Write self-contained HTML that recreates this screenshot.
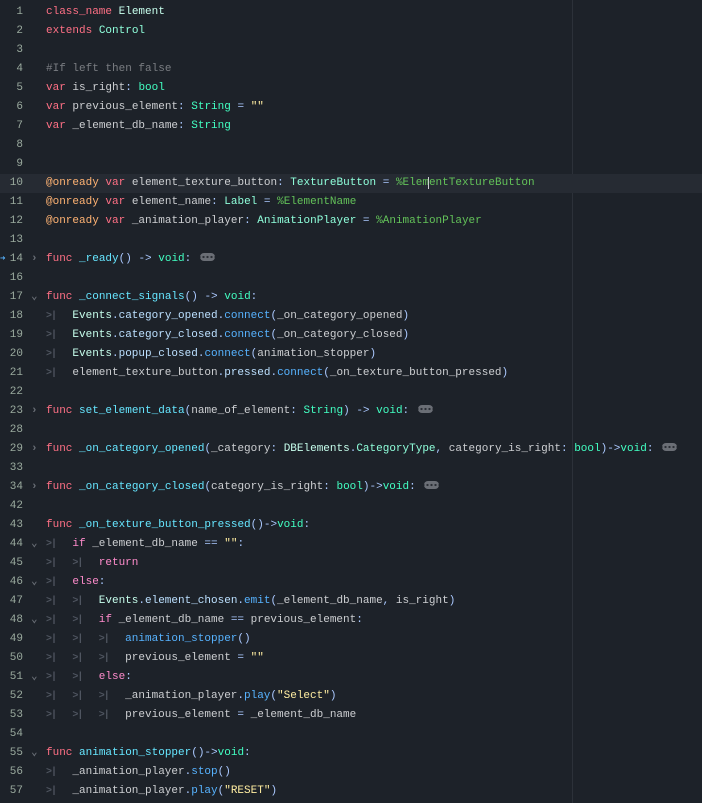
<!DOCTYPE html>
<html><head><meta charset="utf-8"><style>
html,body{margin:0;padding:0;background:#1d2229;width:702px;height:803px;overflow:hidden}
#ed{position:absolute;left:0;top:3px;width:702px;font-family:"Liberation Mono",monospace;font-size:11px;color:#cdcfd2}
.l{position:relative;height:19px;line-height:19px;white-space:pre}
.hl{background:#262b33}
.n{position:absolute;left:0;width:23px;text-align:right;color:#9aaa9e}
.fd{position:absolute;left:31px;top:0;color:#6a6f77;font-size:11px;font-weight:bold}
.c{position:absolute;left:46px}
.tb{display:inline-block;width:26.4px;color:#4f5560;font-size:10px;font-weight:bold;vertical-align:top;letter-spacing:-1px}
.k{color:#ff7085}.cf{color:#ff8ccc}.t{color:#42ffc2}.e{color:#8fffdb}.u{color:#c7ffed}
.s{color:#ffeda1}.y{color:#abc9ff}.f{color:#57b3ff}.fn{color:#66e6ff}.m{color:#bce0ff}
.a{color:#ffb373}.np{color:#63c259}.cm{color:#7a7d82}
.pill{display:inline-block;width:15px;height:8px;border-radius:4px;background:#6a6e75;vertical-align:middle;margin-left:2px;position:relative;top:-1px;
background-image:radial-gradient(circle,#2a2e35 1px,transparent 1.3px);background-size:4px 8px;background-position:1.5px 0;background-repeat:repeat-x}
.guide{position:absolute;left:572px;top:0;width:1px;height:803px;background:#2c3139}
</style></head><body>
<div class="guide"></div>
<div id="ed">
<div class="l"><span class="n">1</span><span class="c"><span class="k">class_name</span> <span class="u">Element</span></span></div>
<div class="l"><span class="n">2</span><span class="c"><span class="k">extends</span> <span class="e">Control</span></span></div>
<div class="l"><span class="n">3</span></div>
<div class="l"><span class="n">4</span><span class="c"><span class="cm">#If left then false</span></span></div>
<div class="l"><span class="n">5</span><span class="c"><span class="k">var</span> is_right<span class="y">:</span> <span class="t">bool</span></span></div>
<div class="l"><span class="n">6</span><span class="c"><span class="k">var</span> previous_element<span class="y">:</span> <span class="t">String</span> <span class="y">=</span> <span class="s">""</span></span></div>
<div class="l"><span class="n">7</span><span class="c"><span class="k">var</span> _element_db_name<span class="y">:</span> <span class="t">String</span></span></div>
<div class="l"><span class="n">8</span></div>
<div class="l"><span class="n">9</span></div>
<div class="l hl"><span class="n">10</span><span class="c"><span class="a">@onready</span> <span class="k">var</span> element_texture_button<span class="y">:</span> <span class="e">TextureButton</span> <span class="y">=</span> <span class="np">%Elem<span style="border-left:1px solid #cdcfd2;margin-left:-1px"></span>entTextureButton</span></span></div>
<div class="l"><span class="n">11</span><span class="c"><span class="a">@onready</span> <span class="k">var</span> element_name<span class="y">:</span> <span class="e">Label</span> <span class="y">=</span> <span class="np">%ElementName</span></span></div>
<div class="l"><span class="n">12</span><span class="c"><span class="a">@onready</span> <span class="k">var</span> _animation_player<span class="y">:</span> <span class="e">AnimationPlayer</span> <span class="y">=</span> <span class="np">%AnimationPlayer</span></span></div>
<div class="l"><span class="n">13</span></div>
<div class="l"><span style="position:absolute;left:0;color:#57b3ff;font-size:9px">➜</span><span class="n">14</span><span class="fd">›</span><span class="c"><span class="k">func</span> <span class="fn">_ready</span><span class="y">()</span> <span class="y">-&gt;</span> <span class="t">void</span><span class="y">:</span> <span class="pill"></span></span></div>
<div class="l"><span class="n">16</span></div>
<div class="l"><span class="n">17</span><span class="fd">⌄</span><span class="c"><span class="k">func</span> <span class="fn">_connect_signals</span><span class="y">()</span> <span class="y">-&gt;</span> <span class="t">void</span><span class="y">:</span></span></div>
<div class="l"><span class="n">18</span><span class="c"><span class="tb">&gt;|</span><span class="u">Events</span><span class="y">.</span><span class="m">category_opened</span><span class="y">.</span><span class="f">connect</span><span class="y">(</span>_on_category_opened<span class="y">)</span></span></div>
<div class="l"><span class="n">19</span><span class="c"><span class="tb">&gt;|</span><span class="u">Events</span><span class="y">.</span><span class="m">category_closed</span><span class="y">.</span><span class="f">connect</span><span class="y">(</span>_on_category_closed<span class="y">)</span></span></div>
<div class="l"><span class="n">20</span><span class="c"><span class="tb">&gt;|</span><span class="u">Events</span><span class="y">.</span><span class="m">popup_closed</span><span class="y">.</span><span class="f">connect</span><span class="y">(</span>animation_stopper<span class="y">)</span></span></div>
<div class="l"><span class="n">21</span><span class="c"><span class="tb">&gt;|</span>element_texture_button<span class="y">.</span><span class="m">pressed</span><span class="y">.</span><span class="f">connect</span><span class="y">(</span>_on_texture_button_pressed<span class="y">)</span></span></div>
<div class="l"><span class="n">22</span></div>
<div class="l"><span class="n">23</span><span class="fd">›</span><span class="c"><span class="k">func</span> <span class="fn">set_element_data</span><span class="y">(</span>name_of_element<span class="y">:</span> <span class="t">String</span><span class="y">)</span> <span class="y">-&gt;</span> <span class="t">void</span><span class="y">:</span> <span class="pill"></span></span></div>
<div class="l"><span class="n">28</span></div>
<div class="l"><span class="n">29</span><span class="fd">›</span><span class="c"><span class="k">func</span> <span class="fn">_on_category_opened</span><span class="y">(</span>_category<span class="y">:</span> <span class="u">DBElements</span><span class="y">.</span><span class="e">CategoryType</span><span class="y">,</span> category_is_right<span class="y">:</span> <span class="t">bool</span><span class="y">)-&gt;</span><span class="t">void</span><span class="y">:</span> <span class="pill"></span></span></div>
<div class="l"><span class="n">33</span></div>
<div class="l"><span class="n">34</span><span class="fd">›</span><span class="c"><span class="k">func</span> <span class="fn">_on_category_closed</span><span class="y">(</span>category_is_right<span class="y">:</span> <span class="t">bool</span><span class="y">)-&gt;</span><span class="t">void</span><span class="y">:</span> <span class="pill"></span></span></div>
<div class="l"><span class="n">42</span></div>
<div class="l"><span class="n">43</span><span class="c"><span class="k">func</span> <span class="fn">_on_texture_button_pressed</span><span class="y">()-&gt;</span><span class="t">void</span><span class="y">:</span></span></div>
<div class="l"><span class="n">44</span><span class="fd">⌄</span><span class="c"><span class="tb">&gt;|</span><span class="cf">if</span> _element_db_name <span class="y">==</span> <span class="s">""</span><span class="y">:</span></span></div>
<div class="l"><span class="n">45</span><span class="c"><span class="tb">&gt;|</span><span class="tb">&gt;|</span><span class="cf">return</span></span></div>
<div class="l"><span class="n">46</span><span class="fd">⌄</span><span class="c"><span class="tb">&gt;|</span><span class="cf">else</span><span class="y">:</span></span></div>
<div class="l"><span class="n">47</span><span class="c"><span class="tb">&gt;|</span><span class="tb">&gt;|</span><span class="u">Events</span><span class="y">.</span><span class="m">element_chosen</span><span class="y">.</span><span class="f">emit</span><span class="y">(</span>_element_db_name<span class="y">,</span> is_right<span class="y">)</span></span></div>
<div class="l"><span class="n">48</span><span class="fd">⌄</span><span class="c"><span class="tb">&gt;|</span><span class="tb">&gt;|</span><span class="cf">if</span> _element_db_name <span class="y">==</span> previous_element<span class="y">:</span></span></div>
<div class="l"><span class="n">49</span><span class="c"><span class="tb">&gt;|</span><span class="tb">&gt;|</span><span class="tb">&gt;|</span><span class="f">animation_stopper</span><span class="y">()</span></span></div>
<div class="l"><span class="n">50</span><span class="c"><span class="tb">&gt;|</span><span class="tb">&gt;|</span><span class="tb">&gt;|</span>previous_element <span class="y">=</span> <span class="s">""</span></span></div>
<div class="l"><span class="n">51</span><span class="fd">⌄</span><span class="c"><span class="tb">&gt;|</span><span class="tb">&gt;|</span><span class="cf">else</span><span class="y">:</span></span></div>
<div class="l"><span class="n">52</span><span class="c"><span class="tb">&gt;|</span><span class="tb">&gt;|</span><span class="tb">&gt;|</span>_animation_player<span class="y">.</span><span class="f">play</span><span class="y">(</span><span class="s">"Select"</span><span class="y">)</span></span></div>
<div class="l"><span class="n">53</span><span class="c"><span class="tb">&gt;|</span><span class="tb">&gt;|</span><span class="tb">&gt;|</span>previous_element <span class="y">=</span> _element_db_name</span></div>
<div class="l"><span class="n">54</span></div>
<div class="l"><span class="n">55</span><span class="fd">⌄</span><span class="c"><span class="k">func</span> <span class="fn">animation_stopper</span><span class="y">()-&gt;</span><span class="t">void</span><span class="y">:</span></span></div>
<div class="l"><span class="n">56</span><span class="c"><span class="tb">&gt;|</span>_animation_player<span class="y">.</span><span class="f">stop</span><span class="y">()</span></span></div>
<div class="l"><span class="n">57</span><span class="c"><span class="tb">&gt;|</span>_animation_player<span class="y">.</span><span class="f">play</span><span class="y">(</span><span class="s">"RESET"</span><span class="y">)</span></span></div>
</div>
</body></html>
